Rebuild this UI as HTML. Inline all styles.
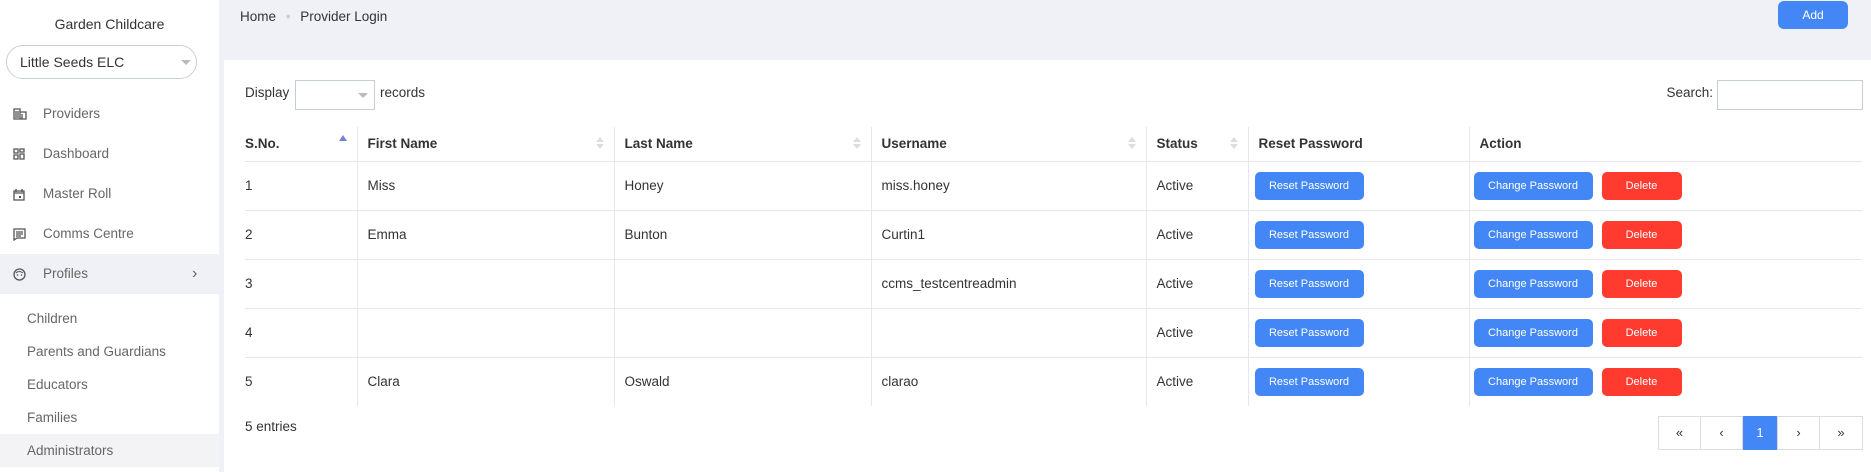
<!DOCTYPE html>
<html><head><meta charset="utf-8"><style>
*{box-sizing:border-box;margin:0;padding:0}
body{width:1871px;height:472px;overflow:hidden;background:#f0f1f7;font-family:"Liberation Sans",sans-serif;font-size:13.5px;color:#333;position:relative}
.a{position:absolute}
.side{left:0;top:0;width:219px;height:472px;background:#fff}
.mi{position:absolute;left:0;width:219px;height:40px;line-height:40px;padding-left:43px;color:#666;font-size:13.5px}
.mi svg{position:absolute;left:13px;top:14px}
.si{position:absolute;left:0;width:219px;height:33px;line-height:33px;padding-left:27px;color:#666;font-size:13.5px}
.card{left:224px;top:60px;width:1647px;height:412px;background:#fff}
table{position:absolute;left:245px;top:127px;border-collapse:collapse;width:1617px}
td,th{height:49px;padding-left:10px;text-align:left;border-left:1px solid #e4e8ee;border-top:1px solid #e4e8ee;font-weight:normal;position:relative}
th{height:34px;font-weight:bold;color:#333;border-top:none}
td:first-child,th:first-child{border-left:none;padding-left:0}
tr:last-child td{border-bottom:none}
.b{display:inline-block;color:#fff;font-size:11px;height:28px;line-height:28px;border-radius:5px;text-align:center;background:#4287f5}
.r{background:#ff3b30}
.sort{position:absolute;right:10px;top:10px;width:8px;height:14px}
.pg{position:absolute;top:416px;height:34px;border:1px solid #ddd;text-align:center;line-height:32px;font-size:13px;color:#333;background:#fff}
</style></head><body>
<div class="a side">
<div class="a" style="left:0;width:219px;top:16px;text-align:center;font-size:14px;color:#333">Garden Childcare</div>
<div class="a" style="left:6px;top:45px;width:191px;height:34px;border:1px solid #c9cfdb;border-radius:17px;line-height:32px;padding-left:13px;font-size:14px;color:#333">Little Seeds ELC<span class="a" style="right:5px;top:14px;border:5px solid transparent;border-top:5px solid #bbb"></span></div>
<div class="mi" style="top:94px"><svg width="14" height="12"><path d="M1 1h6v10H1zM7 4h6v7H7M3 3v7M5 3v7M9 6v5" fill="none" stroke="#555" stroke-width="1.3"/></svg>Providers</div>
<div class="mi" style="top:134px"><svg width="12" height="12"><path d="M1 1h4v4H1zM7 1h4v3H7zM1 7h4v4H1zM7 6h4v5H7z" fill="none" stroke="#555" stroke-width="1.3"/></svg>Dashboard</div>
<div class="mi" style="top:174px"><svg width="12" height="13"><path d="M1 3h10v9H1zM1 5h10M3 1v3M9 1v3" fill="none" stroke="#555" stroke-width="1.3"/><rect x="6" y="8" width="2" height="2" fill="#555"/></svg>Master Roll</div>
<div class="mi" style="top:214px"><svg width="13" height="13"><path d="M1 1h11v9H4l-3 2zM3 4h7M3 6h7M3 8h5" fill="none" stroke="#555" stroke-width="1.3"/></svg>Comms Centre</div>
<div class="mi" style="top:254px;background:#f0f1f7"><svg width="13" height="13"><circle cx="6.5" cy="6.5" r="5.5" fill="none" stroke="#555" stroke-width="1.3"/><path d="M3 5q3-3 7 0" fill="none" stroke="#555"/><circle cx="4.5" cy="7" r=".8" fill="#555"/><circle cx="8.5" cy="7" r=".8" fill="#555"/></svg>Profiles<span class="a" style="left:192px;top:0;color:#666;font-size:16px">›</span></div>
<div class="si" style="top:302px">Children</div>
<div class="si" style="top:335px">Parents and Guardians</div>
<div class="si" style="top:368px">Educators</div>
<div class="si" style="top:401px">Families</div>
<div class="si" style="top:434px;background:#f3f3f5">Administrators</div>
</div>
<div class="a" style="left:240px;top:9px;font-size:13.5px;color:#333">Home <span style="color:#ccc;margin:0 6px">•</span> Provider Login</div>
<div class="a b" style="left:1778px;top:1px;width:70px;font-size:12px;border-radius:6px">Add</div>
<div class="a card"></div>
<div class="a" style="left:245px;top:85px">Display</div>
<div class="a" style="left:295px;top:80px;width:80px;height:30px;border:1px solid #c5cdd8"><span class="a" style="right:6px;top:12px;border:5px solid transparent;border-top:5px solid #bbb"></span></div>
<div class="a" style="left:380px;top:85px">records</div>
<div class="a" style="right:158px;top:85px">Search:</div>
<div class="a" style="left:1717px;top:80px;width:146px;height:30px;border:1px solid #c5cdd8"></div>
<table>
<colgroup><col style="width:112px"><col style="width:257px"><col style="width:257px"><col style="width:275px"><col style="width:102px"><col style="width:221px"><col></colgroup>
<tr><th>S.No.<span class="sort" style="top:8px"><span class="a" style="border:4px solid transparent;border-bottom:6px solid #7a7fd6;top:-4px"></span></span></th><th>First Name<span class="sort"><span class="a" style="border:4px solid transparent;border-bottom:5px solid #ddd;top:-4px"></span><span class="a" style="border:4px solid transparent;border-top:5px solid #ddd;top:7px"></span></span></th><th>Last Name<span class="sort"><span class="a" style="border:4px solid transparent;border-bottom:5px solid #ddd;top:-4px"></span><span class="a" style="border:4px solid transparent;border-top:5px solid #ddd;top:7px"></span></span></th><th>Username<span class="sort"><span class="a" style="border:4px solid transparent;border-bottom:5px solid #ddd;top:-4px"></span><span class="a" style="border:4px solid transparent;border-top:5px solid #ddd;top:7px"></span></span></th><th>Status<span class="sort"><span class="a" style="border:4px solid transparent;border-bottom:5px solid #ddd;top:-4px"></span><span class="a" style="border:4px solid transparent;border-top:5px solid #ddd;top:7px"></span></span></th><th>Reset Password</th><th>Action</th></tr>
<tr><td>1</td><td>Miss</td><td>Honey</td><td>miss.honey</td><td>Active</td><td style="padding-left:6px"><span class="b" style="width:109px">Reset Password</span></td><td style="padding-left:4px"><span class="b" style="width:119px">Change Password</span><span class="b r" style="width:80px;margin-left:9px">Delete</span></td></tr>
<tr><td>2</td><td>Emma</td><td>Bunton</td><td>Curtin1</td><td>Active</td><td style="padding-left:6px"><span class="b" style="width:109px">Reset Password</span></td><td style="padding-left:4px"><span class="b" style="width:119px">Change Password</span><span class="b r" style="width:80px;margin-left:9px">Delete</span></td></tr>
<tr><td>3</td><td></td><td></td><td>ccms_testcentreadmin</td><td>Active</td><td style="padding-left:6px"><span class="b" style="width:109px">Reset Password</span></td><td style="padding-left:4px"><span class="b" style="width:119px">Change Password</span><span class="b r" style="width:80px;margin-left:9px">Delete</span></td></tr>
<tr><td>4</td><td></td><td></td><td></td><td>Active</td><td style="padding-left:6px"><span class="b" style="width:109px">Reset Password</span></td><td style="padding-left:4px"><span class="b" style="width:119px">Change Password</span><span class="b r" style="width:80px;margin-left:9px">Delete</span></td></tr>
<tr><td>5</td><td>Clara</td><td>Oswald</td><td>clarao</td><td>Active</td><td style="padding-left:6px"><span class="b" style="width:109px">Reset Password</span></td><td style="padding-left:4px"><span class="b" style="width:119px">Change Password</span><span class="b r" style="width:80px;margin-left:9px">Delete</span></td></tr>
</table>
<div class="a" style="left:245px;top:419px">5 entries</div>
<div class="pg" style="left:1658px;width:43px">«</div>
<div class="pg" style="left:1700px;width:43px">‹</div>
<div class="pg" style="left:1743px;width:34px;background:#4287f5;color:#fff;border-color:#4287f5">1</div>
<div class="pg" style="left:1777px;width:43px">›</div>
<div class="pg" style="left:1819px;width:44px">»</div>
</body></html>
